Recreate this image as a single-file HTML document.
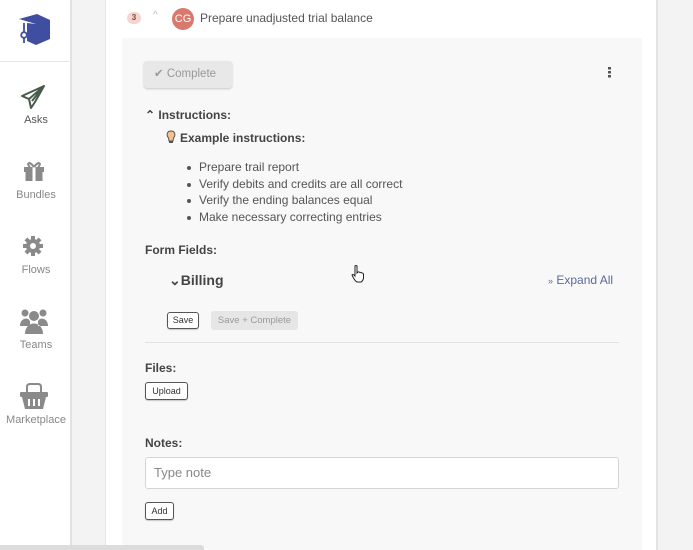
<!DOCTYPE html>
<html><head><style>
*{box-sizing:border-box;margin:0;padding:0}
body{width:693px;height:550px;overflow:hidden;background:#f3f3f3;font-family:"Liberation Sans",sans-serif;position:relative;color:#444}
.side{position:absolute;left:0;top:0;width:72px;height:550px;background:#fff;border-right:2px solid #e2e2e2}
.card{position:absolute;left:105px;top:0;width:553px;height:550px;background:#fff;border-left:1px solid #e6e6e6;border-right:2px solid #e4e4e4}
.panel{position:absolute;left:122px;top:38px;width:520px;height:512px;background:#f8f8f8}
.a{position:absolute;white-space:nowrap}
.nav{position:absolute;left:0;width:72px;text-align:center;font-size:11px;color:#888}
.b{font-weight:bold;color:#444;font-size:12px}
.btn{position:absolute;border:1px solid #555;border-radius:3px;background:#fff;font-size:9px;color:#333;text-align:center;box-shadow:0 1px 1px rgba(0,0,0,.2)}
li{list-style:none;position:relative;padding-left:14px;height:16.5px}
li:before{content:"";position:absolute;left:2px;top:6px;width:4px;height:4px;border-radius:50%;background:#555}
</style></head><body>
<div class="side">
<svg style="position:absolute;left:15px;top:10px" width="36" height="36" viewBox="0 0 36 36"><path d="M4 9 L22 4 L35 10 L35 29 L21 35 L21 14 Z" fill="#3f4ea0"/><path d="M12 13 L21 14 L21 35 L12 31Z" fill="#3f4ea0"/><path d="M9 13 V22" stroke="#3f4ea0" stroke-width="1.8"/><circle cx="9" cy="25" r="2.8" fill="none" stroke="#3f4ea0" stroke-width="1.8"/><path d="M9 28 V33" stroke="#3f4ea0" stroke-width="1.8"/></svg>
<div style="position:absolute;left:0;top:61px;width:72px;border-top:1px solid #e5e5e5"></div>
<svg style="position:absolute;left:20px;top:84px" width="26" height="26" viewBox="0 0 26 26"><path d="M24 2 L2 12 L9 15 L11 24 L15 18 L24 2Z M9 15 L24 2 L12 17" fill="none" stroke="#4a5a4a" stroke-width="2" stroke-linejoin="round"/></svg>
<div class="nav" style="top:114px;color:#555">Asks</div>
<svg style="position:absolute;left:23px;top:160px" width="22" height="22" viewBox="0 0 22 22"><rect x="1" y="7" width="20" height="5" fill="#8a8a8a"/><rect x="2.5" y="12" width="17" height="9" fill="#8a8a8a"/><rect x="9.5" y="7" width="3" height="14" fill="#fff"/><path d="M11 7 C6 0 3 4 7 7 M11 7 C16 0 19 4 15 7" fill="none" stroke="#8a8a8a" stroke-width="2"/></svg>
<div class="nav" style="top:189px">Bundles</div>
<svg style="position:absolute;left:22px;top:235px" width="22" height="22" viewBox="0 0 22 22"><g fill="#8a8a8a"><circle cx="11" cy="11" r="7"/><rect x="9" y="1" width="4" height="20"/><rect x="1" y="9" width="20" height="4"/><rect x="9" y="1" width="4" height="20" transform="rotate(45 11 11)"/><rect x="9" y="1" width="4" height="20" transform="rotate(-45 11 11)"/></g><circle cx="11" cy="11" r="3" fill="#fff"/></svg>
<div class="nav" style="top:264px">Flows</div>
<svg style="position:absolute;left:19px;top:308px" width="30" height="26" viewBox="0 0 30 26"><g fill="#8a8a8a"><circle cx="6" cy="5" r="3.5"/><circle cx="24" cy="5" r="3.5"/><circle cx="15" cy="8" r="5"/><path d="M1 18 C1 9 11 9 11 14 V18Z M29 18 C29 9 19 9 19 14 V18Z M6 26 C6 12 24 12 24 26Z"/></g></svg>
<div class="nav" style="top:339px">Teams</div>
<svg style="position:absolute;left:19px;top:382px" width="30" height="28" viewBox="0 0 30 28"><path d="M8 10 V5 Q8 2 11 2 H19 Q22 2 22 5 V10" fill="none" stroke="#8a8a8a" stroke-width="2"/><rect x="1" y="10" width="28" height="5" rx="1" fill="#8a8a8a"/><path d="M3 15 H27 L24 27 H6Z" fill="#8a8a8a"/><path d="M10 17 V24 M15 17 V24 M20 17 V24" stroke="#fff" stroke-width="2"/></svg>
<div class="nav" style="top:414px">Marketplace</div>
</div>
<div class="card"></div>
<div class="panel"></div>
<div style="position:absolute;left:0;top:545px;width:204px;height:5px;background:#dcdcdc;border-radius:0 3px 0 0"></div>

<div class="a" style="left:127px;top:12px;width:14px;height:12px;border-radius:6px;background:#f6d4cf;font-size:8px;font-weight:bold;color:#7a4a44;text-align:center;line-height:12px">3</div>
<div class="a" style="left:153px;top:10px;font-size:10px;color:#bbb">^</div>
<div class="a" style="left:172px;top:8px;width:22px;height:22px;border-radius:50%;background:#d9786d;color:#fff;font-size:11px;text-align:center;line-height:22px">CG</div>
<div class="a" style="left:200px;top:11px;font-size:12px;color:#555">Prepare unadjusted trial balance</div>

<div class="a" style="left:144px;top:61px;width:88px;height:27px;border-radius:3px;background:#e8e8e8;box-shadow:0 1px 2px rgba(0,0,0,.2);font-size:11.5px;color:#999;line-height:27px;padding-left:10px">✔ Complete</div>
<div class="a" style="left:608px;top:67px;width:3px;height:12px;background:repeating-linear-gradient(#555 0 2.5px,transparent 2.5px 4px)"></div>

<div class="a b" style="left:145px;top:108px">⌃ Instructions:</div>
<svg class="a" style="left:166px;top:130px" width="10" height="14" viewBox="0 0 10 14"><path d="M5 1 C1 1 0 5 2.5 8 L3 11 H7 L7.5 8 C10 5 9 1 5 1Z" fill="#f7c08f" stroke="#555" stroke-width="1"/><rect x="3" y="11" width="4" height="2" fill="#555"/></svg>
<div class="a b" style="left:180px;top:131px">Example instructions:</div>
<ul class="a" style="left:185px;top:160px;font-size:12px;color:#555"><li>Prepare trail report</li><li>Verify debits and credits are all correct</li><li>Verify the ending balances equal</li><li>Make necessary correcting entries</li></ul>

<div class="a b" style="left:145px;top:243px">Form Fields:</div>
<div class="a" style="left:169px;top:272px;font-size:14px;font-weight:bold;color:#444">⌄Billing</div>
<div class="a" style="left:548px;top:273px;font-size:12px;color:#5a6a9a"><span style="font-size:9px">»</span> Expand All</div>
<div class="btn" style="left:167px;top:312px;width:32px;height:17px;line-height:15px">Save</div>
<div class="a" style="left:211px;top:311px;width:87px;height:19px;border-radius:3px;background:#e6e6e6;font-size:9.5px;color:#999;text-align:center;line-height:19px">Save + Complete</div>
<div class="a" style="left:145px;top:342px;width:474px;border-top:1px solid #e2e2e2"></div>

<div class="a b" style="left:145px;top:361px">Files:</div>
<div class="btn" style="left:145px;top:382px;width:43px;height:18px;line-height:16px">Upload</div>

<div class="a b" style="left:145px;top:436px">Notes:</div>
<div class="a" style="left:145px;top:457px;width:474px;height:32px;background:#fff;border:1px solid #d5d5d5;border-radius:3px;font-size:13px;color:#888;padding:7px 8px">Type note</div>
<div class="btn" style="left:145px;top:502px;width:29px;height:18px;line-height:16px">Add</div>
<svg class="a" style="left:351px;top:264px" width="14" height="20" viewBox="0 0 14 20"><path d="M4 2 Q5 1 6 2 V9 L7 8 Q8 7.5 9 8.5 Q10 8 11 9 Q12 9 12.5 10 V14 Q12 17 10 18 H6 Q4 17 2 13 L1 11 Q1.5 10 3 11 L4 12Z" fill="#fff" stroke="#222" stroke-width="1"/></svg>
</body></html>
